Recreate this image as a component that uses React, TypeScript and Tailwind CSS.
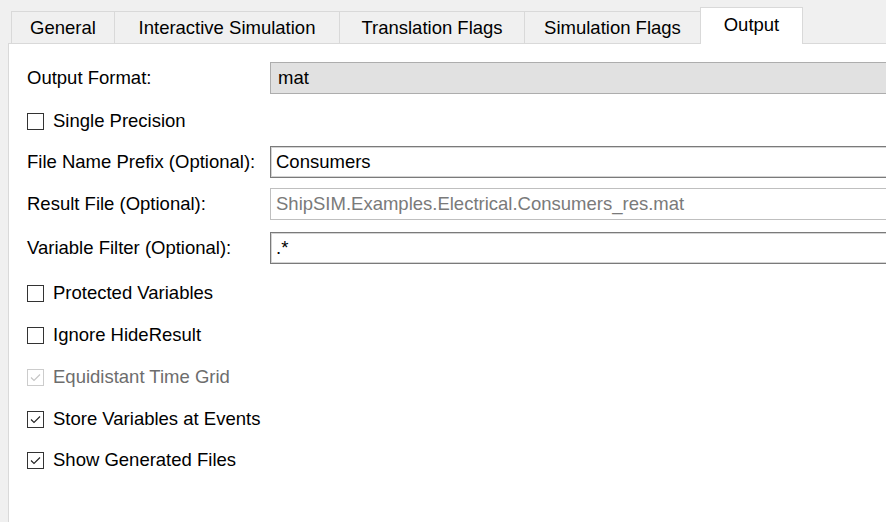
import type { ReactNode } from "react";

const font = { fontFamily: '"Liberation Sans", Arial, sans-serif' };

const tabs = [
    { label: "General", width: "w-[103px]" },
    { label: "Interactive Simulation", width: "w-[225px]" },
    { label: "Translation Flags", width: "w-[185px]" },
    { label: "Simulation Flags", width: "w-[176px]" }
];

function CheckBox({ checked, disabled }: { checked?: boolean; disabled?: boolean }) {
    return (
        <span
            className={`flex h-[17px] w-[17px] shrink-0 items-center justify-center border bg-white ${
                disabled ? "border-[#cccccc]" : "border-[#333333]"
            }`}
        >
            {checked && (
                <svg width="13" height="13" viewBox="0 0 13 13" fill="none">
                    <path
                        d="M2 6.5 L5 9.5 L11 3.5"
                        stroke={disabled ? "#c4c4c4" : "#222222"}
                        strokeWidth="1.1"
                    />
                </svg>
            )}
        </span>
    );
}

function CheckRow({
    label,
    checked,
    disabled,
    className
}: {
    label: string;
    checked?: boolean;
    disabled?: boolean;
    className: string;
}) {
    return (
        <div className={`flex h-[32px] items-center gap-[9px] ${className}`}>
            <CheckBox checked={checked} disabled={disabled} />
            <span className={disabled ? "text-[#6d6d6d]" : "text-black"}>{label}</span>
        </div>
    );
}

function FieldRow({ label, className, children }: { label: string; className: string; children: ReactNode }) {
    return (
        <div className={`flex h-[32px] items-center ${className}`}>
            <span className="w-[243px] shrink-0">{label}</span>
            {children}
        </div>
    );
}

export default function App() {
    return (
        <div className="flex h-[522px] w-[886px] flex-col overflow-hidden bg-[#f0f0f0] text-[18.5px] text-black" style={font}>
            <div className="flex h-[43px] items-end pl-[11px]">
                {tabs.map((tab) => (
                    <div
                        key={tab.label}
                        className={`flex h-[32px] ${tab.width} items-center justify-center border border-b-0 border-r-0 border-[#d9d9d9] bg-[#f0f0f0]`}
                    >
                        {tab.label}
                    </div>
                ))}
                <div className="relative z-10 -mb-px flex h-[37px] w-[103px] items-center justify-center border border-b-0 border-[#d9d9d9] bg-white pb-[3px]">
                    Output
                </div>
            </div>

            <div className="ml-[8px] flex flex-1 flex-col border-l border-t border-[#d9d9d9] bg-white pl-[18px] pt-[18px]">
                <FieldRow label="Output Format:" className="">
                    <div className="-mr-[6px] flex h-[32px] flex-1 items-center border border-[#adadad] bg-[#e1e1e1] px-[7px]">mat</div>
                </FieldRow>

                <CheckRow label="Single Precision" className="mt-[11px]" />

                <FieldRow label="File Name Prefix (Optional):" className="mt-[9px]">
                    <div className="-mr-[6px] flex h-[32px] flex-1 items-center border border-[#7a7a7a] px-[5px] shadow-[inset_0_0_0_1px_#d4d4d4]">
                        Consumers
                    </div>
                </FieldRow>

                <FieldRow label="Result File (Optional):" className="mt-[10px]">
                    <div className="-mr-[6px] flex h-[32px] flex-1 items-center border border-[#bfbfbf] px-[5px] text-[#7a7a7a]">
                        ShipSIM.Examples.Electrical.Consumers_res.mat
                    </div>
                </FieldRow>

                <FieldRow label="Variable Filter (Optional):" className="mt-[12px]">
                    <div className="-mr-[6px] flex h-[32px] flex-1 items-center border border-[#7a7a7a] px-[5px] shadow-[inset_0_0_0_1px_#d4d4d4]">
                        .*
                    </div>
                </FieldRow>

                <CheckRow label="Protected Variables" className="mt-[13px]" />
                <CheckRow label="Ignore HideResult" className="mt-[10px]" />
                <CheckRow label="Equidistant Time Grid" checked disabled className="mt-[10px]" />
                <CheckRow label="Store Variables at Events" checked className="mt-[10px]" />
                <CheckRow label="Show Generated Files" checked className="mt-[9px]" />
            </div>
        </div>
    );
}
